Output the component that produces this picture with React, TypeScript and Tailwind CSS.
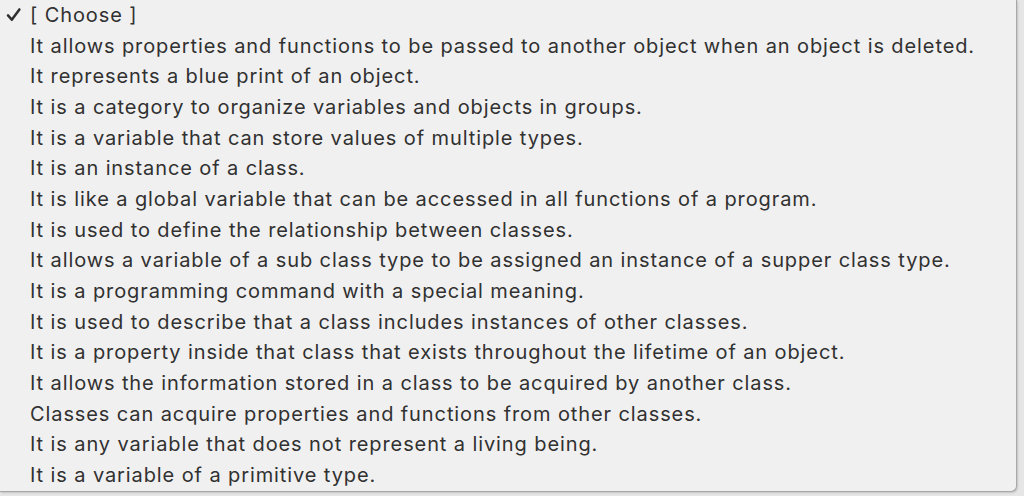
import React from "react";

const items = [
  "It allows properties and functions to be passed to another object when an object is deleted.",
  "It represents a blue print of an object.",
  "It is a category to organize variables and objects in groups.",
  "It is a variable that can store values of multiple types.",
  "It is an instance of a class.",
  "It is like a global variable that can be accessed in all functions of a program.",
  "It is used to define the relationship between classes.",
  "It allows a variable of a sub class type to be assigned an instance of a supper class type.",
  "It is a programming command with a special meaning.",
  "It is used to describe that a class includes instances of other classes.",
  "It is a property inside that class that exists throughout the lifetime of an object.",
  "It allows the information stored in a class to be acquired by another class.",
  "Classes can acquire properties and functions from other classes.",
  "It is any variable that does not represent a living being.",
  "It is a variable of a primitive type.",
];

export default function App() {
  return (
    <div className="w-[1024px] h-[496px] bg-[#e6e6e6] overflow-hidden">
      <div
        className="w-[1017px] h-[492px] bg-[#f0f0f0] border-r border-b border-[#a8a8a8] rounded-br-[6px] shadow-[1px_1px_2px_rgba(0,0,0,0.15)] text-[#313131] text-[20px] leading-[30.67px] tracking-[0.9px]"
        style={{ fontFamily: "Inter, 'Liberation Sans', sans-serif" }}
      >
        <div className="flex items-center h-[30.67px]">
          <span className="w-[30px] flex items-center">
            <svg width="30" height="30" viewBox="0 0 30 30">
              <path
                d="M8 15.4 L11.8 19.8 L19.4 9.4"
                fill="none"
                stroke="#2f2f2f"
                strokeWidth="2.5"
                strokeLinecap="round"
                strokeLinejoin="round"
              />
            </svg>
          </span>
          <span>[ Choose ]</span>
        </div>
        {items.map((t) => (
          <div key={t} className="pl-[30px] whitespace-nowrap">
            {t}
          </div>
        ))}
      </div>
    </div>
  );
}
